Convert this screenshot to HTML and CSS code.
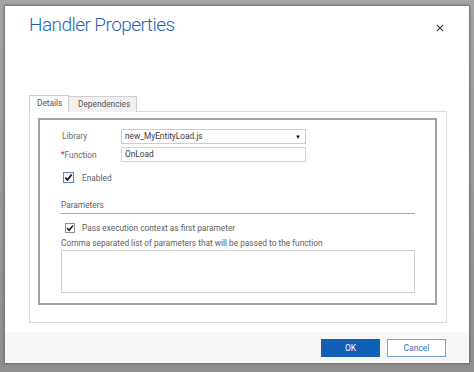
FILE: index.html
```html
<!DOCTYPE html>
<html>
<head>
<meta charset="utf-8">
<link rel="stylesheet" href="styles.css">
</head>
<body>
<div class="dialog">
  <div class="header">
    <h1 class="title">Handler Properties</h1>
    <button class="close" aria-label="Close">
      <svg width="8" height="8" viewBox="0 0 8 8"><path d="M0.8 0.8 L7.2 7.2 M7.2 0.8 L0.8 7.2" stroke="#3a3a3a" stroke-width="1.2" fill="none"/></svg>
    </button>
  </div>
  <div class="tabs">
    <div class="tab active">Details</div>
    <div class="tab">Dependencies</div>
  </div>
  <div class="frame">
    <div class="panel">
      <div class="row">
        <label class="lbl">Library</label>
        <div class="select"><span>new_MyEntityLoad.js</span><span class="arrow">&#9660;</span></div>
      </div>
      <div class="row row2">
        <label class="lbl lbl-req"><span class="req">*</span>Function</label>
        <div class="input">OnLoad</div>
      </div>
      <div class="check-row enabled">
        <svg class="cb" width="11" height="11" viewBox="0 0 11 11"><rect x="0.5" y="0.5" width="10" height="10" fill="#f4f7fb" stroke="#6a86ad"/><path d="M2.4 5.6 L4.5 7.9 L8.6 2.6" fill="none" stroke="#111" stroke-width="1.7"/></svg>
        <span>Enabled</span>
      </div>
      <div class="section">Parameters</div>
      <div class="check-row pass">
        <svg class="cb" width="10" height="10" viewBox="0 0 10 10"><rect x="0.5" y="0.5" width="9" height="9" fill="#fff" stroke="#8f8f8f"/><path d="M2.1 5.1 L4.1 7.3 L7.9 2.4" fill="none" stroke="#222" stroke-width="1.6"/></svg>
        <span>Pass execution context as first parameter</span>
      </div>
      <div class="hint">Comma separated list of parameters that will be passed to the function</div>
      <div class="textarea"></div>
    </div>
  </div>
  <div class="footer">
    <button class="btn btn-ok">OK</button>
    <button class="btn btn-cancel">Cancel</button>
  </div>
</div>
</body>
</html>
```
FILE: styles.css
```css
* { box-sizing: border-box; }
html, body { margin: 0; }
body {
  width: 474px;
  height: 372px;
  padding: 6px 5px 9px 5px;
  background: linear-gradient(#a4a4a4, #8e8e8e);
  font-family: Roboto, "Open Sans", sans-serif;
  overflow: hidden;
}
.dialog {
  width: 464px;
  height: 357px;
  background: #fff;
  box-shadow: 0 0 2px 1px #6a6a6a;
  display: flex;
  flex-direction: column;
}
.header {
  height: 89px;
  padding: 7px 25px 0 24px;
  display: flex;
  justify-content: space-between;
  align-items: flex-start;
}
.title {
  margin: 0;
  font-family: Roboto, sans-serif;
  font-weight: 300;
  font-size: 19px;
  letter-spacing: -0.55px;
  line-height: 24px;
  color: #1f67b6;
}
.close {
  margin-top: 11px;
  padding: 0;
  border: 0;
  background: none;
  width: 8px;
  height: 8px;
}
.close svg { display: block; }
.tabs {
  display: flex;
  align-items: flex-end;
  margin-left: 24px;
  height: 17px;
  position: relative;
  z-index: 1;
}
.tab {
  height: 16px;
  border: 1px solid #cfcfcf;
  border-bottom: 0;
  font-size: 8.3px;
  color: #555;
  line-height: 15px;
  padding: 0 6px;
  background: #f1f1f1;
}
.tab.active {
  width: 40px;
  height: 17px;
  background: #fff;
  padding-left: 7px;
}
.tab + .tab {
  width: 68px;
  border-left: 0;
  padding-left: 9px;
}
.frame {
  margin: -1px 0 0 24px;
  width: 418px;
  height: 212px;
  border: 1px solid #dadada;
  padding: 6px 9px 17px 8px;
}
.panel {
  height: 187px;
  border: 2px solid #a2a2a2;
  padding: 9px 0 10px 21px;
  font-size: 8.3px;
  color: #606060;
}
.row {
  display: flex;
  height: 15px;
  align-items: center;
}
.row2 { margin-top: 3px; }
.lbl {
  width: 60px;
  padding-left: 1px;
  line-height: 15px;
  color: #6a6a6a;
}
.lbl-req { padding-left: 0; padding-top: 2px; }
.req { color: #d22; }
.select, .input {
  width: 185px;
  height: 15px;
  border: 1px solid #cdcdcd;
  padding: 0 4px 0 3px;
  line-height: 13px;
  color: #3a3a3a;
  display: flex;
  justify-content: space-between;
}
.input { border-color: #d4d4d4; }
.arrow { font-size: 6px; color: #111; line-height: 13px; }
.check-row {
  display: flex;
  align-items: center;
  height: 11px;
}
.cb { display: block; }
.enabled { margin-top: 10px; padding-left: 2px; }
.enabled span { margin-left: 8px; }
.section {
  margin-top: 16px;
  width: 354px;
  line-height: 12px;
  padding-bottom: 2px;
  border-bottom: 1px solid #a6a6a6;
}
.pass { margin-top: 8px; padding-left: 4px; }
.pass span { margin-left: 7px; }
.hint {
  margin-top: 4px;
  line-height: 12px;
}
.textarea {
  margin-top: 1px;
  width: 354px;
  height: 43px;
  border: 1px solid #d0d0d0;
}
.footer {
  margin-top: auto;
  height: 31px;
  background: #f7f7f7;
  display: flex;
  justify-content: flex-end;
  gap: 7px;
  padding: 7px 23px 0 0;
}
.btn {
  width: 59px;
  height: 18px;
  font-family: Roboto, sans-serif;
  font-size: 8.5px;
  padding: 0;
  line-height: 16px;
}
.btn-ok {
  background: #1260b6;
  border: 1px solid #1260b6;
  color: #fff;
}
.btn-cancel {
  background: #fff;
  border: 1px solid #78a3d6;
  color: #3a72b8;
}
```
